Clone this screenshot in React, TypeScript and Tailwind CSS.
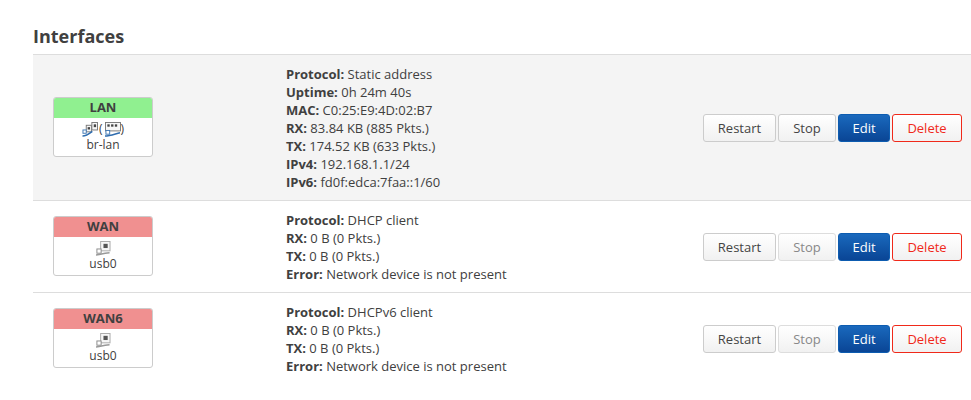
import React from 'react';

const EthIcon = () => (
  <svg width="16" height="15" viewBox="0 0 16 16" className="shrink-0">
    <rect x="5.5" y="0.5" width="10" height="10" fill="#f7f7f7" stroke="#a8a8a8" strokeWidth="1" />
    <rect x="8.5" y="3" width="4.5" height="4.5" fill="#555" />
    <rect x="1.5" y="8.5" width="4.5" height="4.5" fill="#fff" stroke="#888" strokeWidth="1" />
    <path d="M0.5 15 C4 15 7 13 15 12.5" fill="none" stroke="#999" strokeWidth="1.6" />
  </svg>
);

const BridgeIcon = () => (
  <span className="flex items-center justify-center h-[15px]">
    <svg width="16" height="15" viewBox="0 0 17 16" className="shrink-0">
      <rect x="4.5" y="3.5" width="5.5" height="7" fill="#f7f7f7" stroke="#777" strokeWidth="1" />
      <rect x="10.5" y="0.5" width="6" height="8" fill="#f7f7f7" stroke="#777" strokeWidth="1" />
      <rect x="12.5" y="2.5" width="2.5" height="3" fill="#444" />
      <rect x="6" y="5.5" width="2.5" height="2.5" fill="#444" />
      <rect x="1" y="8.5" width="3.5" height="3.5" fill="#fff" stroke="#3f78b5" strokeWidth="1" />
      <path d="M0.5 15 C4 15 7 13 11 10" fill="none" stroke="#2f6cae" strokeWidth="1.7" />
    </svg>
    <span className="mx-[1px] mb-[2px] text-[12px] leading-none">(</span>
    <svg width="17" height="15" viewBox="0 0 18 16" className="shrink-0">
      <rect x="1.5" y="0.5" width="16" height="9" fill="#f7f7f7" stroke="#777" strokeWidth="1" />
      <rect x="3.5" y="2.5" width="2.5" height="2.5" fill="#444" />
      <rect x="7.5" y="2.5" width="2.5" height="2.5" fill="#444" />
      <rect x="11.5" y="2.5" width="2.5" height="2.5" fill="#444" />
      <rect x="2" y="9" width="4" height="4" fill="#fff" stroke="#3f78b5" strokeWidth="1" />
      <path d="M1 15 C6 15 11 13 17 11.5" fill="none" stroke="#2f6cae" strokeWidth="1.7" />
    </svg>
    <span className="mb-[2px] text-[12px] leading-none">)</span>
  </span>
);

type Btn = { stopDisabled?: boolean };

const Actions = ({ stopDisabled }: Btn) => {
  const base = 'h-[28px] rounded-[3px] border text-[13px] leading-none flex items-center justify-center';
  return (
    <div className="flex gap-[2px] w-[263px] shrink-0">
      <button className={`${base} w-[73px] border-[#ccc] text-[#444] bg-gradient-to-b from-white to-[#f1f1f1]`}>Restart</button>
      <button className={`${base} w-[58px] ${stopDisabled ? 'border-[#ddd] text-[#888]' : 'border-[#ccc] text-[#444]'} bg-gradient-to-b from-white to-[#f1f1f1]`}>Stop</button>
      <button className={`${base} w-[52px] border-[#0d5cb0] text-white bg-gradient-to-b from-[#1a69bd] to-[#0a4595]`}>Edit</button>
      <button className={`${base} w-[70px] border-[#f0291a] text-[#f0291a] bg-gradient-to-b from-white to-[#f1f1f1]`}>Delete</button>
    </div>
  );
};

type Row = {
  name: string;
  color: string;
  device: string;
  lines: [string, string][];
  shaded?: boolean;
  stopDisabled?: boolean;
  bridge?: boolean;
};

const rows: Row[] = [
  {
    name: 'LAN',
    color: 'bg-[#90f090]',
    device: 'br-lan',
    shaded: true,
    bridge: true,
    lines: [
      ['Protocol:', 'Static address'],
      ['Uptime:', '0h 24m 40s'],
      ['MAC:', 'C0:25:E9:4D:02:B7'],
      ['RX:', '83.84 KB (885 Pkts.)'],
      ['TX:', '174.52 KB (633 Pkts.)'],
      ['IPv4:', '192.168.1.1/24'],
      ['IPv6:', 'fd0f:edca:7faa::1/60'],
    ],
  },
  {
    name: 'WAN',
    color: 'bg-[#f09090]',
    device: 'usb0',
    stopDisabled: true,
    lines: [
      ['Protocol:', 'DHCP client'],
      ['RX:', '0 B (0 Pkts.)'],
      ['TX:', '0 B (0 Pkts.)'],
      ['Error:', 'Network device is not present'],
    ],
  },
  {
    name: 'WAN6',
    color: 'bg-[#f09090]',
    device: 'usb0',
    stopDisabled: true,
    lines: [
      ['Protocol:', 'DHCPv6 client'],
      ['RX:', '0 B (0 Pkts.)'],
      ['TX:', '0 B (0 Pkts.)'],
      ['Error:', 'Network device is not present'],
    ],
  },
];

export default function App() {
  return (
    <div className="bg-white h-[400px] w-[971px] overflow-hidden pl-[33px] text-[#404040] font-['Open_Sans',sans-serif]">
      <h3 className="pt-[25px] h-[54px] text-[18px] leading-[22px] font-bold">Interfaces</h3>
      <div className="border-t border-[#ddd]">
        {rows.map((r) => (
          <div
            key={r.name}
            className={`flex items-center border-b last:border-b-0 border-[#ddd] pt-[9px] pb-[8px] ${r.shaded ? 'bg-[#f4f4f4]' : 'bg-white'}`}
          >
            <div className="w-[253px] shrink-0 pl-[20px] pb-[2px]">
              <div className="w-[100px] rounded-[3px] border border-[#ccc] bg-white overflow-hidden">
                <div className={`${r.color} h-[20px] text-center text-[13px] leading-[19px] font-bold`}>{r.name}</div>
                <div className="h-[38px] flex flex-col items-center pt-[4px] text-[12px] leading-[16px]">
                  {r.bridge ? <BridgeIcon /> : <EthIcon />}
                  <span>{r.device}</span>
                </div>
              </div>
            </div>
            <div className="flex-1 py-[1px] text-[13px] leading-[18px]">
              {r.lines.map(([k, v]) => (
                <div key={k}>
                  <strong className="font-bold">{k}</strong> {v}
                </div>
              ))}
            </div>
            <Actions stopDisabled={r.stopDisabled} />
            <div className="w-[5px] shrink-0" />
          </div>
        ))}
      </div>
    </div>
  );
}
